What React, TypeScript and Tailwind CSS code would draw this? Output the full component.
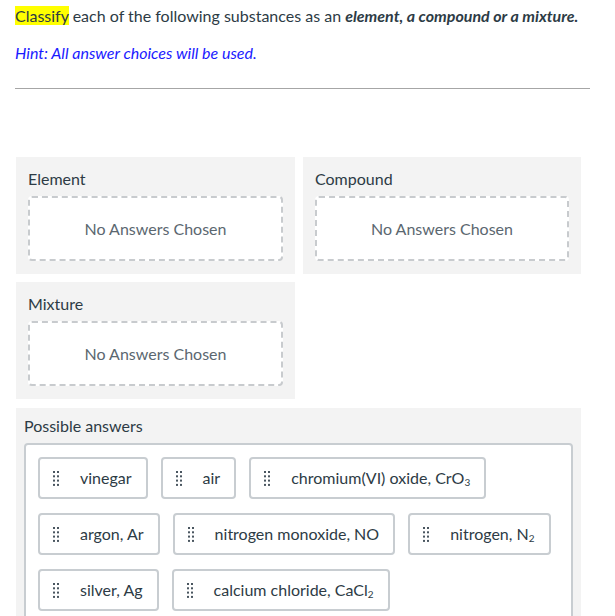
import React from "react";

function Grip() {
  const dots = [];
  for (let r = 0; r < 4; r++) {
    for (let c = 0; c < 2; c++) {
      dots.push(<rect key={`${r}-${c}`} x={c * 4} y={r * 4.3} width={2} height={2} fill="#4a5660" />);
    }
  }
  return (
    <svg width="6" height="15" viewBox="0 0 6 15" className="shrink-0">
      {dots}
    </svg>
  );
}

function Chip({ children }: { children: React.ReactNode }) {
  return (
    <div className="h-[42px] flex items-center border-2 border-[#c8cdd1] rounded-[4px] bg-white pl-[13px] pr-[14px] gap-[21px] text-[#2d3b45]">
      <Grip />
      <span className="whitespace-nowrap">{children}</span>
    </div>
  );
}

function Sub({ children }: { children: React.ReactNode }) {
  return <span className="text-[10px] relative top-[2px]">{children}</span>;
}

function Bucket({ label }: { label: string }) {
  return (
    <div className="bg-[#f3f3f3] px-[12px] pt-[11px] pb-[13px]">
      <div className="leading-[22px] text-[#2d3b45] mb-[6px]">{label}</div>
      <div className="h-[65px] bg-white border-2 border-dashed border-[#c8cbce] rounded-[4px] flex items-center justify-center text-[#5b6770]">
        No Answers Chosen
      </div>
    </div>
  );
}

export default function App() {
  return (
    <div className="bg-white min-h-[616px] text-[16px] text-[#2d3b45]" style={{ fontFamily: "Lato, 'Noto Sans', sans-serif" }}>
      <div className="pl-[15px] pr-[25px]">
        <p className="pt-[6px] leading-[20px]">
          <span className="bg-[#ffff00]">Classify</span> each of the following substances as an{" "}
          <strong className="italic font-bold">element, a compound or a mixture.</strong>
        </p>
        <p className="mt-[17px] leading-[20px] italic text-[#1a1aff]">Hint: All answer choices will be used.</p>
        <div className="mt-[25px] h-[1px] bg-[#a6a6a6]" />
      </div>
      <div className="pl-[16px] pr-[34px] mt-[68px]">
        <div className="grid grid-cols-[279px_278px] gap-x-[8px] gap-y-[8px]">
          <Bucket label="Element" />
          <Bucket label="Compound" />
          <Bucket label="Mixture" />
        </div>
        <div className="mt-[9px] bg-[#f3f3f3] px-[8px] pt-[7px]">
          <div className="leading-[22px] mb-[6px]">Possible answers</div>
          <div className="bg-white border-2 border-[#c8cdd1] rounded-[4px] p-[12px]">
            <div className="flex flex-col gap-[14px]">
              <div className="flex gap-[13px]">
                <Chip>vinegar</Chip>
                <Chip>air</Chip>
                <Chip>
                  chromium(VI) oxide, CrO<Sub>3</Sub>
                </Chip>
              </div>
              <div className="flex gap-[13px]">
                <Chip>argon, Ar</Chip>
                <Chip>nitrogen monoxide, NO</Chip>
                <Chip>
                  nitrogen, N<Sub>2</Sub>
                </Chip>
              </div>
              <div className="flex gap-[13px]">
                <Chip>silver, Ag</Chip>
                <Chip>
                  calcium chloride, CaCl<Sub>2</Sub>
                </Chip>
              </div>
            </div>
          </div>
        </div>
      </div>
    </div>
  );
}
